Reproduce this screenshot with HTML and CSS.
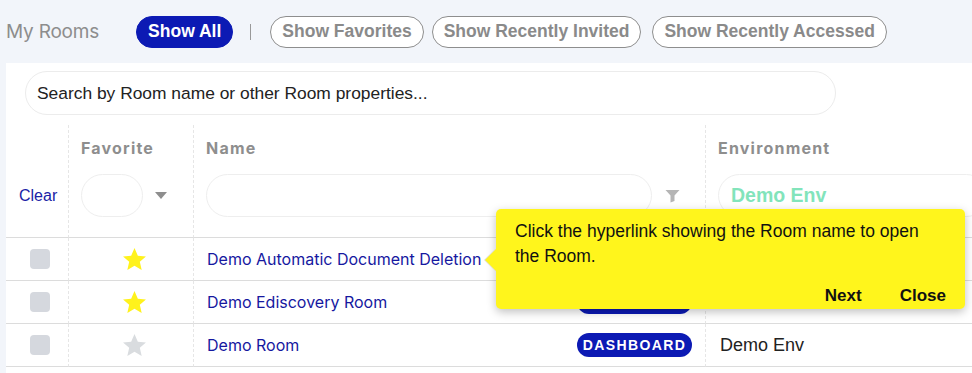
FILE: index.html
```html
<!DOCTYPE html>
<html>
<head>
<meta charset="utf-8">
<link rel="stylesheet" href="styles.css">
</head>
<body>
<div class="topbar">
  <span class="title">My Rooms</span>
  <button class="pill active">Show All</button>
  <span class="sep"></span>
  <button class="pill">Show Favorites</button>
  <button class="pill">Show Recently Invited</button>
  <button class="pill wide-gap">Show Recently Accessed</button>
</div>
<div class="card">
  <div class="search">Search by Room name or other Room properties...</div>
  <div class="table">
    <div class="hcell c-sel"><span class="clear">Clear</span></div>
    <div class="hcell c-fav">
      <div class="label">Favorite</div>
      <div class="filter">
        <div class="select"></div>
        <span class="caret"></span>
      </div>
    </div>
    <div class="hcell c-name">
      <div class="label">Name</div>
      <div class="filter">
        <div class="input"></div>
        <svg class="funnel" width="15" height="14" viewBox="0 0 15 14"><path d="M0.5 1h14l-5 5.5v5.5l-4 1.5V6.5z" fill="#b5b5b5"/></svg>
      </div>
    </div>
    <div class="hcell c-env">
      <div class="label">Environment</div>
      <div class="filter">
        <div class="input env">Demo Env</div>
      </div>
    </div>

    <div class="cell c-sel"><span class="check"></span></div>
    <div class="cell c-fav"><svg class="star" viewBox="0 0 24 24"><path d="M12 1l3.2 7.3 7.8.7-5.9 5.2 1.8 7.8L12 17.9l-6.9 4.1 1.8-7.8L1 9l7.8-.7z" fill="#fff21c"/></svg></div>
    <div class="cell c-name"><a class="link">Demo Automatic Document Deletion</a><span class="badge">DASHBOARD</span></div>
    <div class="cell c-env">Demo Env</div>

    <div class="cell c-sel"><span class="check"></span></div>
    <div class="cell c-fav"><svg class="star" viewBox="0 0 24 24"><path d="M12 1l3.2 7.3 7.8.7-5.9 5.2 1.8 7.8L12 17.9l-6.9 4.1 1.8-7.8L1 9l7.8-.7z" fill="#fff21c"/></svg></div>
    <div class="cell c-name"><a class="link">Demo Ediscovery Room</a><span class="badge">DASHBOARD</span></div>
    <div class="cell c-env">Demo Env</div>

    <div class="cell c-sel"><span class="check"></span></div>
    <div class="cell c-fav"><svg class="star" viewBox="0 0 24 24"><path d="M12 1l3.2 7.3 7.8.7-5.9 5.2 1.8 7.8L12 17.9l-6.9 4.1 1.8-7.8L1 9l7.8-.7z" fill="#d9dcdf"/></svg></div>
    <div class="cell c-name"><a class="link">Demo Room</a><span class="badge">DASHBOARD</span></div>
    <div class="cell c-env">Demo Env</div>
  </div>
  <div class="tooltip">
    <span class="arrow"></span>
    <p>Click the hyperlink showing the Room name to open the Room.</p>
    <div class="actions"><span>Next</span><span>Close</span></div>
  </div>
</div>
</body>
</html>
```
FILE: styles.css
```css
* { box-sizing: border-box; }
html, body { margin: 0; padding: 0; }
body {
  background: #f2f5fa;
  font-family: "Liberation Sans", Arial, sans-serif;
  width: 972px;
  height: 373px;
  overflow: hidden;
  position: relative;
}
.topbar {
  height: 63px;
  display: flex;
  align-items: center;
  padding-left: 6px;
}
.title {
  font-family: Inter, sans-serif;
  font-size: 19px;
  color: #8d8d8d;
  margin-right: 37px;
  letter-spacing: -0.2px;
}
.pill {
  font-family: "Liberation Sans", Arial, sans-serif;
  font-weight: bold;
  font-size: 17.5px;
  height: 32px;
  padding: 0 11px;
  border-radius: 16px;
  border: 1px solid #8e8e8e;
  background: #fff;
  color: #8a8a8a;
  margin-right: 8px;
}
.pill.wide-gap { margin-left: 3px; }
.pill.active {
  background: #0c1ab4;
  border-color: #0c1ab4;
  color: #fff;
}
.sep {
  width: 1px;
  height: 16px;
  background: #999;
  margin: 0 19px 0 9px;
}
.card {
  margin-left: 6px;
  background: #fff;
  height: 310px;
  padding-top: 8px;
  position: relative;
}
.search {
  margin-left: 19px;
  width: 811px;
  height: 44px;
  border: 1px solid #ececec;
  border-radius: 22px;
  font-size: 17.4px;
  color: #222;
  padding-left: 11px;
  display: flex;
  align-items: center;
}
.table {
  margin-top: 10px;
  display: grid;
  grid-template-columns: 62px 125px 512px 300px;
  grid-auto-rows: 43px;
  grid-template-rows: 113px;
}
.hcell, .cell {
  border-bottom: 1px solid #dcdcdc;
}
.c-fav, .c-name, .c-env {
  border-left: 1px dashed #e6e6e6;
}
.hcell { padding: 12px 12px 0; }
.hcell.c-sel {
  padding: 0 0 0 13px;
  display: flex;
  align-items: flex-end;
  padding-bottom: 32px;
}
.clear {
  color: #1a22a6;
  font-size: 16px;
}
.label {
  font-family: Inter, sans-serif;
  font-weight: 700;
  font-size: 16px;
  line-height: 22px;
  color: #8e8e8e;
  letter-spacing: 1.2px;
}
.filter {
  margin-top: 15px;
  display: flex;
  align-items: center;
  height: 43px;
}
.select {
  width: 62px;
  height: 43px;
  border: 1px solid #eeeeee;
  border-radius: 22px;
}
.caret {
  margin-left: 12px;
  border-left: 6px solid transparent;
  border-right: 6px solid transparent;
  border-top: 7px solid #8e8e8e;
}
.input {
  width: 446px;
  height: 43px;
  border: 1px solid #eeeeee;
  border-radius: 22px;
  flex: none;
}
.funnel { margin-left: 13px; }
.input.env {
  width: 270px;
  padding-left: 12px;
  display: flex;
  align-items: center;
  font-weight: bold;
  font-size: 19.5px;
  color: #82e4bb;
}
.cell {
  display: flex;
  align-items: center;
}
.cell.c-sel { padding-left: 24px; }
.check {
  width: 20px;
  height: 20px;
  border-radius: 4px;
  background: #d5d8de;
}
.cell.c-fav { justify-content: center; padding-left: 6px; }
.star { width: 25px; height: 25px; }
.cell.c-name {
  padding: 0 13px 0 13px;
  justify-content: space-between;
}
.link {
  font-family: Inter, sans-serif;
  font-size: 16px;
  color: #16189f;
}
.badge {
  background: #0c1ab4;
  color: #fff;
  font-weight: bold;
  font-size: 14px;
  letter-spacing: 1.4px;
  height: 24px;
  width: 115px;
  border-radius: 12px;
  display: flex;
  align-items: center;
  justify-content: center;
}
.cell.c-env {
  padding-left: 14px;
  font-size: 18px;
  color: #222;
}
.tooltip {
  position: absolute;
  left: 490px;
  top: 146px;
  width: 469px;
  height: 100px;
  background: #fff51c;
  border-radius: 5px;
  box-shadow: 0 3px 10px rgba(0,0,0,0.25);
  padding: 10px 19px 0;
}
.tooltip p {
  margin: 0;
  font-size: 17.5px;
  line-height: 25px;
  color: #111;
}
.arrow {
  position: absolute;
  left: -11px;
  top: 39px;
  width: 0;
  height: 0;
  border-top: 12px solid transparent;
  border-bottom: 12px solid transparent;
  border-right: 12px solid #fff51c;
  filter: drop-shadow(-1px 0 0 #ddd);
}
.actions {
  display: flex;
  justify-content: flex-end;
  gap: 38px;
  margin-top: 17px;
  font-weight: bold;
  font-size: 17px;
  color: #111;
}
```
